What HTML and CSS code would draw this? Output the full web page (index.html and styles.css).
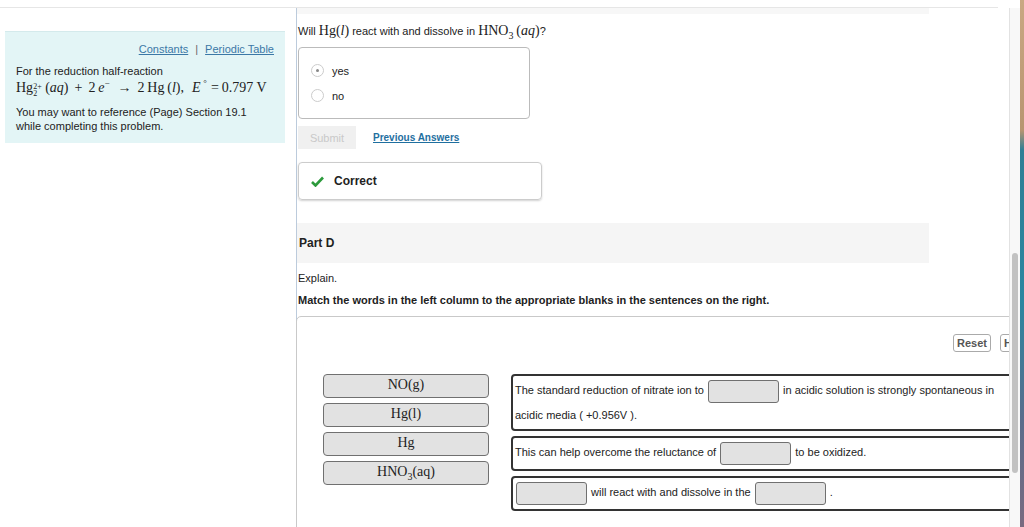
FILE: index.html
```html
<!DOCTYPE html>
<html lang="en">
<head>
    <meta charset="UTF-8">
    <title>Part D - Explain</title>
    <link rel="stylesheet" href="styles.css">
</head>
<body>
<div class="screen">
    <div class="page">
        <div class="topline"></div>
        <div class="layout">
            <aside class="side">
                <div class="info">
                    <div class="links"><a href="#">Constants</a><span class="sep">|</span><a href="#">Periodic Table</a></div>
                    <p class="lead">For the reduction half-reaction</p>
                    <p class="eq">Hg<span class="supsub"><sup>2+</sup><sub>2</sub></span> (<i>aq</i>)<span class="op">+</span>2&thinsp;<i>e</i><sup>&minus;</sup><span class="op arrow">&rarr;</span>2&thinsp;Hg&thinsp;(<i>l</i>),<span class="gap"></span><i>E</i>&thinsp;<sup>&deg;</sup><span class="eqs">=</span>0.797 V</p>
                    <p class="ref">You may want to reference (Page) Section 19.1<br>while completing this problem.</p>
                </div>
            </aside>
            <main class="main">
                <div class="band-top"></div>
                <p class="question">Will <span class="m">Hg(<i>l</i>)</span> react with and dissolve in <span class="m">HNO<sub>3</sub>&thinsp;(<i>aq</i>)</span>?</p>
                <div class="choices">
                    <label class="choice"><span class="radio on"></span>yes</label>
                    <label class="choice"><span class="radio"></span>no</label>
                </div>
                <div class="actions">
                    <button class="submit" disabled>Submit</button>
                    <a href="#" class="prev">Previous Answers</a>
                </div>
                <div class="feedback">
                    <svg class="check" width="13" height="11" viewBox="0 0 13 11"><path d="M1 6 L4.5 9.5 L12 1.5" fill="none" stroke="#2c9a3c" stroke-width="2.6"/></svg>
                    <span>Correct</span>
                </div>
                <div class="part">Part D</div>
                <p class="explain">Explain.</p>
                <p class="task">Match the words in the left column to the appropriate blanks in the sentences on the right.</p>
                <div class="match">
                    <div class="toolbar">
                        <button class="tool">Reset</button>
                        <button class="tool">Help</button>
                    </div>
                    <div class="columns">
                        <div class="words">
                            <div class="word">NO(g)</div>
                            <div class="word">Hg(l)</div>
                            <div class="word">Hg</div>
                            <div class="word">HNO<sub>3</sub>(aq)</div>
                        </div>
                        <div class="sentences">
                            <div class="sentence">The standard reduction of nitrate ion to <span class="blank"></span> in acidic solution is strongly spontaneous in acidic media ( +0.956V ).</div>
                            <div class="sentence">This can help overcome the reluctance of <span class="blank"></span> to be oxidized.</div>
                            <div class="sentence"><span class="blank"></span> will react with and dissolve in the <span class="blank"></span> .</div>
                        </div>
                    </div>
                </div>
            </main>
        </div>
    </div>
    <div class="scrollbar"><div class="thumb"></div></div>
    <div class="desktop"></div>
</div>
</body>
</html>
```

FILE: styles.css
```css
body {
    margin: 0;
    font-family: "Liberation Sans", Arial, sans-serif;
    color: #222;
    background: #fff;
}
p {
    margin: 0;
}
a {
    color: #2d6e9c;
}
.screen {
    display: flex;
    width: 1024px;
    height: 527px;
    overflow: hidden;
}
.page {
    width: 1009px;
    flex: none;
    overflow: hidden;
    background: #fff;
}
.topline {
    width: 998px;
    height: 7px;
    border-bottom: 1px solid #e6e6e6;
}
.layout {
    display: flex;
    height: 519px;
}
.side {
    width: 296px;
    flex: none;
    padding-top: 23px;
}
.info {
    margin-left: 5px;
    width: 258px;
    height: 111px;
    padding: 0 11px;
    background: #e3f5f6;
    border-top: 1px solid #d4eaec;
    font-size: 11px;
}
.links {
    text-align: right;
    padding-top: 10px;
    line-height: 14px;
}
.links a {
    color: #3b78a6;
}
.sep {
    margin: 0 7px;
    color: #666;
}
.lead {
    margin-top: 8px;
    line-height: 14px;
}
.eq {
    margin-top: -2px;
    height: 17px;
    font-family: "Liberation Serif", "Times New Roman", serif;
    font-size: 14px;
    line-height: 15px;
    white-space: nowrap;
}
.eq sup {
    font-size: 9px;
}
.op {
    margin: 0 6px;
}
.arrow {
    margin: 0 6px 0 8px;
}
.gap {
    display: inline-block;
    width: 8px;
}
.eqs {
    margin: 0 3px 0 4px;
}
.supsub {
    display: inline-flex;
    flex-direction: column;
    font-size: 8px;
    line-height: 7px;
    vertical-align: 3px;
}
.supsub sup,
.supsub sub {
    font-size: 8px;
    vertical-align: baseline;
}
.ref {
    margin-top: 12px;
    line-height: 14px;
}
.main {
    flex: 1;
    border-left: 1px solid #bccbdc;
    min-width: 0;
}
.band-top {
    width: 632px;
    height: 6px;
    background: #f7f7f7;
}
.question {
    margin-top: 9px;
    padding-left: 1px;
    font-size: 11px;
    line-height: 16px;
}
.m {
    font-family: "Liberation Serif", "Times New Roman", serif;
    font-size: 14px;
}
.m sub {
    font-size: 10px;
    line-height: 0;
}
.choices {
    margin: 8px 0 0 1px;
    width: 230px;
    height: 60px;
    padding: 10px 0 0;
    border: 1px solid #bbb;
    border-radius: 4px;
}
.choice {
    display: flex;
    align-items: center;
    height: 25px;
    padding-left: 12px;
    font-size: 11px;
}
.radio {
    width: 11px;
    height: 11px;
    border: 1px solid #ccc;
    border-radius: 50%;
    margin-right: 8px;
    display: flex;
    align-items: center;
    justify-content: center;
}
.radio.on::after {
    content: "";
    width: 3px;
    height: 3px;
    border-radius: 50%;
    background: #888;
}
.actions {
    display: flex;
    align-items: center;
    gap: 17px;
    margin: 7px 0 0 1px;
}
.submit {
    width: 58px;
    height: 23px;
    border: none;
    background: #f0f0f0;
    color: #c9c9c9;
    font-family: inherit;
    font-size: 11px;
}
.prev {
    font-size: 10px;
    font-weight: bold;
    color: #1f6f9f;
}
.feedback {
    display: flex;
    align-items: center;
    margin: 13px 0 0 1px;
    width: 242px;
    height: 36px;
    border: 1px solid #ccc;
    border-radius: 4px;
    box-shadow: 0 1px 2px rgba(0, 0, 0, 0.18);
    font-size: 12px;
    font-weight: bold;
}
.check {
    margin: 0 10px 0 12px;
}
.part {
    margin: 23px 0 0 0;
    width: 630px;
    height: 40px;
    padding-left: 2px;
    background: #f5f5f5;
    line-height: 40px;
    font-size: 12px;
    font-weight: bold;
}
.explain {
    margin-top: 8px;
    padding-left: 1px;
    font-size: 11px;
    line-height: 14px;
}
.task {
    margin-top: 8px;
    padding-left: 1px;
    font-size: 11px;
    font-weight: bold;
    line-height: 14px;
}
.match {
    margin: 9px 0 0 -1px;
    width: 740px;
    height: 220px;
    border: 1px solid #c9c9c9;
    border-radius: 5px 0 0 0;
    overflow: hidden;
}
.toolbar {
    display: flex;
    gap: 9px;
    padding: 17px 0 0 656px;
}
.tool {
    height: 18px;
    padding: 0 3px;
    border: 1px solid #aaa;
    border-radius: 3px;
    background: #fff;
    color: #555;
    font-family: inherit;
    font-size: 11px;
    font-weight: bold;
}
.columns {
    display: flex;
    gap: 22px;
    margin-top: 22px;
    padding-left: 26px;
}
.words {
    width: 166px;
    display: flex;
    flex-direction: column;
    gap: 5px;
}
.word {
    height: 22px;
    border: 1.5px solid #707070;
    border-radius: 4px;
    background: #e2e2e2;
    text-align: center;
    font-family: "Liberation Serif", "Times New Roman", serif;
    font-size: 14px;
    line-height: 19px;
}
.word sub {
    font-size: 10px;
    line-height: 0;
}
.sentences {
    width: 520px;
    flex: none;
    display: flex;
    flex-direction: column;
    gap: 5px;
}
.sentence {
    border: 2px solid #333;
    border-radius: 4px;
    padding: 3px 4px 3px 2px;
    font-size: 11px;
    line-height: 22px;
}
.blank {
    display: inline-block;
    width: 69px;
    height: 21px;
    border: 1.5px solid #707070;
    border-radius: 3px;
    background: #e2e2e2;
    vertical-align: middle;
    margin: 1px 1px;
}
.scrollbar {
    width: 10px;
    flex: none;
    margin-top: 8px;
    background: #f8f8f8;
    border-left: 1px solid #e2e2e2;
    position: relative;
}
.thumb {
    position: absolute;
    left: 2px;
    top: 245px;
    width: 6px;
    height: 220px;
    border-radius: 3px;
    background: #c2c2c2;
}
.desktop {
    flex: 1;
    background: linear-gradient(#c9a883 0, #b89570 130px, #2f7f95 150px, #2b86a0 300px, #5a6d8c 420px, #7a6a80 527px);
}
```
